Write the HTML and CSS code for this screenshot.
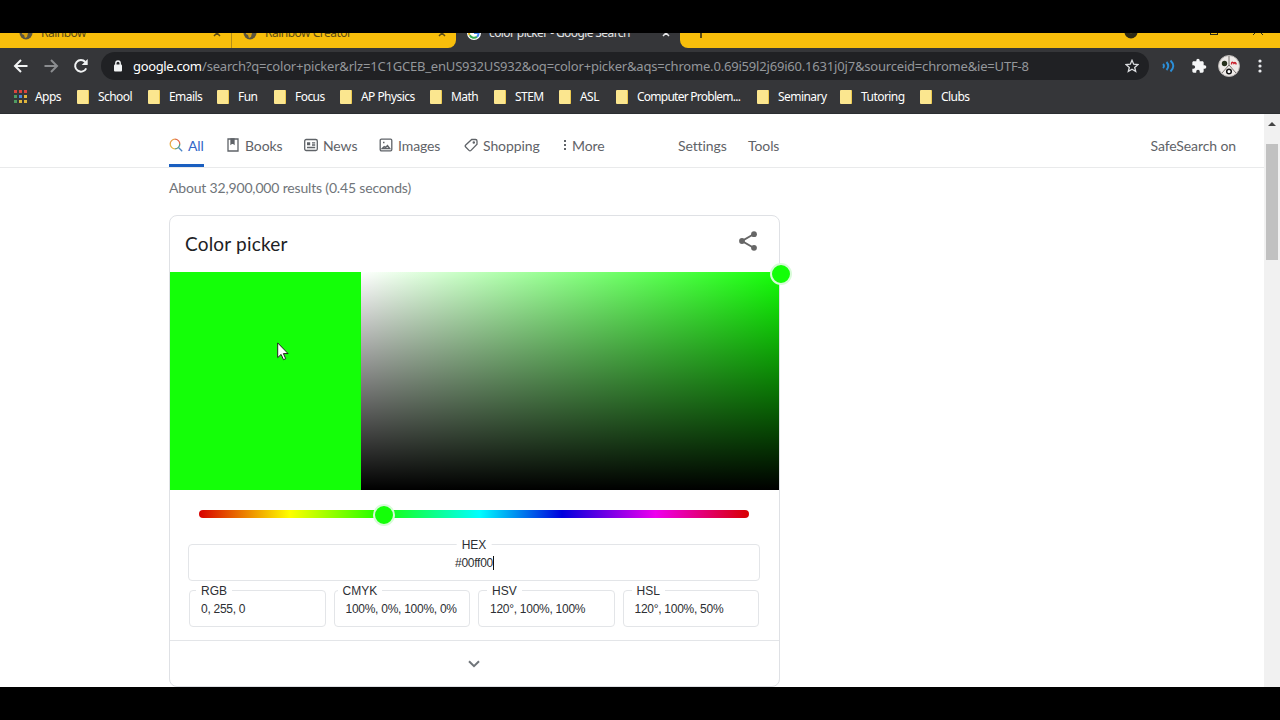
FILE: index.html
```
<!DOCTYPE html>
<html lang="en">
<head>
  <meta charset="UTF-8" />
  <meta name="viewport" content="width=device-width, initial-scale=1.0" />
  <title>color picker - Google Search</title>
  <link rel="stylesheet" href="styles.css">
</head>
<body>
  <div class="tabstrip">
    <div class="tab tab-first">
      <svg class="favicon" viewBox="0 0 14 14"><circle cx="7" cy="7" r="6.5" fill="#5b5540"/><path d="M3 5l3-2 3 4-1 4-2 1-1-3-2-1z" fill="#d9a20c"/></svg>
      <span class="tab-title">Rainbow</span>
      <svg class="tab-close" viewBox="0 0 8 8"><path d="M1 1l6 6M7 1L1 7"/></svg>
    </div>
    <div class="tab tab-second">
      <svg class="favicon" viewBox="0 0 14 14"><circle cx="7" cy="7" r="6.5" fill="#5b5540"/><path d="M3 5l3-2 3 4-1 4-2 1-1-3-2-1z" fill="#d9a20c"/></svg>
      <span class="tab-title">Rainbow Creator</span>
      <svg class="tab-close" viewBox="0 0 8 8"><path d="M1 1l6 6M7 1L1 7"/></svg>
    </div>
    <div class="tab tab-active">
      <svg class="favicon" viewBox="0 0 14 14"><circle cx="7" cy="7" r="7" fill="#fff"/><path d="M2.5 5a5 5 0 0 0 0 4" stroke="#e8b313" stroke-width="2" fill="none"/><path d="M2.8 9.2A4.8 4.8 0 0 0 10 10.8" stroke="#34a853" stroke-width="2" fill="none"/><path d="M7 7h4.6a5 5 0 0 1-1.6 3.8" stroke="#4285f4" stroke-width="2" fill="none"/></svg>
      <span class="tab-title">color picker - Google Search</span>
      <svg class="tab-close" viewBox="0 0 8 8"><path d="M1 1l6 6M7 1L1 7"/></svg>
    </div>
    <div class="tab-rest">
      <svg class="new-tab" viewBox="0 0 12 12"><path d="M6 0v12M0 6h12"/></svg>
      <svg class="tab-search" viewBox="0 0 14 14"><circle cx="7" cy="7" r="6.5" fill="#2d2a16"/><path d="M4.5 6L7 8.500l2.500-2.500z" fill="#c99b0b"/></svg>
      <span class="win-max"></span>
      <svg class="win-close" viewBox="0 0 10 10"><path d="M0 0l10 10M10 0L0 10"/></svg>
    </div>
  </div>

  <div class="toolbar">
    <svg class="nav-icon" viewBox="0 0 16 16"><path d="M14.500 8H2.500M8 2L2 8l6 6"/></svg>
    <svg class="nav-icon dim" viewBox="0 0 16 16"><path d="M1.500 8h12M8 2l6 6-6 6"/></svg>
    <svg class="nav-icon" viewBox="0 0 16 16"><path d="M13.200 10.300A5.800 5.800 0 1 1 12.300 4"/><path d="M14.700 1v6H8.700z" class="solid"/></svg>
    <div class="omnibox">
      <svg class="lock" viewBox="0 0 10 12"><rect x="1" y="4.500" width="8" height="7" rx="1" fill="#f1f3f4"/><path d="M2.800 5V3.200a2.200 2.200 0 0 1 4.400 0V5" fill="none" stroke="#f1f3f4" stroke-width="1.400"/></svg>
      <span class="host">google.com</span><span class="path">/search?q=color+picker&amp;rlz=1C1GCEB_enUS932US932&amp;oq=color+picker&amp;aqs=chrome.0.69i59l2j69i60.1631j0j7&amp;sourceid=chrome&amp;ie=UTF-8</span>
      <svg class="star" viewBox="0 0 14 14"><path d="M7 1.300l1.700 3.900 4.200.4-3.200 2.800 1 4.100L7 10.300l-3.700 2.200 1-4.100L1.100 5.600l4.200-.4z"/></svg>
    </div>
    <svg class="ext-waves" viewBox="0 0 16 14"><path d="M2 5q2 2 0 4M5.500 3q3.500 4 0 8M9.500 1.500q5.500 5.500 0 11"/></svg>
    <svg class="ext-puzzle" viewBox="0 0 24 24"><path d="M20.500 11H19V7c0-1.100-.9-2-2-2h-4V3.500a2.500 2.500 0 0 0-5 0V5H4c-1.100 0-2 .9-2 2v3.800h1.500a2.700 2.700 0 0 1 0 5.400H2V20c0 1.100.9 2 2 2h3.800v-1.500a2.700 2.700 0 0 1 5.400 0V22H17c1.100 0 2-.9 2-2v-4h1.500a2.500 2.500 0 0 0 0-5z"/></svg>
    <svg class="avatar" viewBox="0 0 22 22"><circle cx="11" cy="11" r="10.500" fill="#eeeae8" stroke="#b8b4b2"/><path d="M11 1v9M11 10l-7 8M11 10l7 8" stroke="#77706c" stroke-width="1"/><circle cx="6.500" cy="8.500" r="2.700" fill="#26301c"/><path d="M13.500 9.500q0-3 1.500-2t1 1q.5-2 2 0v1" stroke="#c9202c" stroke-width="1.400" fill="none"/><circle cx="11" cy="16.500" r="2.300" fill="#fff" stroke="#111" stroke-width="1.500"/></svg>
    <svg class="kebab" viewBox="0 0 4 14"><circle cx="2" cy="2" r="1.600"/><circle cx="2" cy="7" r="1.600"/><circle cx="2" cy="12" r="1.600"/></svg>
  </div>

  <div class="bookmarks">
    <div class="bookmark">
      <svg class="apps-icon" viewBox="0 0 13 13">
        <path d="M0 0h3v3H0z" fill="#d9443c"/><path d="M5 0h3v3H5z" fill="#d9443c"/><path d="M10 0h3v3h-3z" fill="#d9443c"/>
        <path d="M0 5h3v3H0z" fill="#4f9b62"/><path d="M5 5h3v3H5z" fill="#4a86dc"/><path d="M10 5h3v3h-3z" fill="#e0b53c"/>
        <path d="M0 10h3v3H0z" fill="#4f9b62"/><path d="M5 10h3v3H5z" fill="#e0b53c"/><path d="M10 10h3v3h-3z" fill="#e0b53c"/>
      </svg>
      <span>Apps</span>
    </div>
    <div class="bookmark"><i class="folder"></i><span>School</span></div>
    <div class="bookmark"><i class="folder"></i><span>Emails</span></div>
    <div class="bookmark"><i class="folder"></i><span>Fun</span></div>
    <div class="bookmark"><i class="folder"></i><span>Focus</span></div>
    <div class="bookmark"><i class="folder"></i><span>AP Physics</span></div>
    <div class="bookmark"><i class="folder"></i><span>Math</span></div>
    <div class="bookmark"><i class="folder"></i><span>STEM</span></div>
    <div class="bookmark"><i class="folder"></i><span>ASL</span></div>
    <div class="bookmark long"><i class="folder"></i><span>Computer Problem...</span></div>
    <div class="bookmark"><i class="folder"></i><span>Seminary</span></div>
    <div class="bookmark"><i class="folder"></i><span>Tutoring</span></div>
    <div class="bookmark"><i class="folder"></i><span>Clubs</span></div>
  </div>

  <div class="viewport">
    <div class="page">
      <div class="search-nav">
        <a class="nav-item selected">
          <svg viewBox="0 0 14 14"><path d="M1.200 6A4.800 4.800 0 0 1 6 1.200" stroke="#e8a04a"/><path d="M6 1.200A4.800 4.800 0 0 1 10.800 6" stroke="#e06a4c"/><path d="M1.200 6A4.800 4.800 0 0 0 6 10.800" stroke="#e8b84a"/><path d="M6 10.800A4.800 4.800 0 0 0 10.800 6" stroke="#5a9f86"/><path d="M9.500 9.500L13.200 13.200" stroke="#4a86c8"/></svg>
          <span>All</span>
        </a>
        <a class="nav-item">
          <svg viewBox="0 0 14 14"><path d="M2 1h10v12H2z"/><path d="M5 1v5l1.500-1.200L8 6V1z" fill="#5f6368"/></svg>
          <span>Books</span>
        </a>
        <a class="nav-item">
          <svg viewBox="0 0 14 14"><rect x=".7" y="1.500" width="12.600" height="11" rx="1.500"/><path d="M3 4.800h3.200M3 6.500h3.200M3 5.600h3.200M8 4.800h3.200M8 7h3.200M3 9.500h8.200"/></svg>
          <span>News</span>
        </a>
        <a class="nav-item">
          <svg viewBox="0 0 14 14"><rect x="1.200" y="1.200" width="11.600" height="11.600" rx="1.200"/><path d="M3.200 10.500l2-2 1.300 1 2-2 2.300 3zM4 4.500h1.500"/></svg>
          <span>Images</span>
        </a>
        <a class="nav-item">
          <svg viewBox="0 0 14 14"><path d="M7.700 1.500h3.800q1.500 0 1.500 1.500v3.200L7 12.400q-1 1-2 0L1.700 9q-1-1 0-2z"/><circle cx="9.800" cy="4.500" r=".6"/></svg>
          <span>Shopping</span>
        </a>
        <a class="nav-item more">
          <svg viewBox="0 0 4 14"><path d="M2 2v2M2 6v2M2 10v2" stroke-width="2"/></svg>
          <span>More</span>
        </a>
        <a class="nav-item">Settings</a>
        <a class="nav-item">Tools</a>
        <a class="nav-item safe">SafeSearch on</a>
      </div>

      <p class="result-stats">About 32,900,000 results (0.45 seconds)</p>

      <div class="card">
        <div class="card-head">
          <h2>Color picker</h2>
          <svg class="share" viewBox="0 0 18 20"><path d="M15 3L3 10l12 7" fill="none" stroke="#666" stroke-width="2"/><circle cx="15" cy="3.200" r="2.900"/><circle cx="3" cy="10" r="2.900"/><circle cx="15" cy="16.800" r="2.900"/></svg>
        </div>
        <div class="picker">
          <div class="swatch">
            <svg class="cursor" viewBox="0 0 12 19"><path d="M.7.9v14.700l3.400-3.200 2.400 5.300 2.200-1-2.300-5.100h4.700z" fill="#fff" stroke="#222" stroke-width="1"/></svg>
          </div>
          <div class="shade">
            <span class="handle shade-handle"></span>
          </div>
        </div>
        <div class="hue">
          <span class="handle hue-handle"></span>
        </div>
        <div class="field hex">
          <label>HEX</label>
          <span class="value">#00ff00<i class="caret"></i></span>
        </div>
        <div class="field-row">
          <div class="field"><label>RGB</label><span class="value">0, 255, 0</span></div>
          <div class="field cmyk"><label>CMYK</label><span class="value">100%, 0%, 100%, 0%</span></div>
          <div class="field hs"><label>HSV</label><span class="value">120°, 100%, 100%</span></div>
          <div class="field hs"><label>HSL</label><span class="value">120°, 100%, 50%</span></div>
        </div>
        <div class="expand">
          <svg viewBox="0 0 12 8"><path d="M1 1.200l5 5 5-5"/></svg>
        </div>
      </div>
    </div>
    <div class="scrollbar">
      <span class="arrow-up"></span>
      <span class="thumb"></span>
    </div>
  </div>
</body>
</html>
```
FILE: styles.css
```
* {
  margin: 0;
  padding: 0;
  box-sizing: border-box;
}
body {
  width: 1280px;
  height: 720px;
  padding: 33px 0;
  overflow: hidden;
  background: #000;
  font-family: Lato, sans-serif;
}
svg {
  display: block;
  flex-shrink: 0;
}

/* tabs, cut off at the top of the window */
.tabstrip {
  display: flex;
  height: 16px;
  background: #353639;
  overflow: hidden;
  font-family: "Noto Sans", sans-serif;
  font-size: 12px;
  border-bottom: 1px solid #353639;
}
.tab {
  display: flex;
  align-items: center;
  height: 30px;
  margin-top: -15px;
  background: #f8be0b;
  color: #5e4c14;
}
.tab-first {
  width: 232px;
  padding: 0 10px 1px 19px;
  border-right: 1px solid #b78e16;
}
.tab-second {
  width: 224px;
  padding: 0 10px 1px 11px;
  border-bottom-right-radius: 8px;
}
.tab-active {
  width: 224px;
  padding: 0 10px 1px 11px;
  background: #353639;
  color: #e4e5e6;
}
.favicon {
  width: 14px;
  height: 14px;
  margin-right: 8px;
}
.tab-title {
  flex: 1;
  white-space: nowrap;
  letter-spacing: -0.5px;
}
.tab-active .tab-title {
  letter-spacing: -0.6px;
}
.tab-close {
  width: 8px;
  height: 8px;
  stroke: currentColor;
  stroke-width: 1.5;
}
.tab-rest {
  flex: 1;
  display: flex;
  align-items: center;
  height: 30px;
  margin-top: -15px;
  padding: 0 0 3px 15px;
  background: #f8be0b;
  border-bottom-left-radius: 8px;
}
.new-tab {
  width: 12px;
  height: 12px;
  stroke: #5e4c14;
  stroke-width: 2;
}
.tab-search {
  width: 14px;
  height: 14px;
  margin-left: 417px;
}
.win-max {
  width: 8px;
  height: 9px;
  margin: 0 0 2px 72px;
  border: 1px solid #2d2a16;
}
.win-close {
  width: 10px;
  height: 10px;
  margin: 0 0 4px 35px;
  stroke: #2d2a16;
}

/* toolbar */
.toolbar {
  display: flex;
  align-items: center;
  height: 33px;
  padding-left: 13px;
  background: #353639;
}
.nav-icon {
  width: 16px;
  height: 16px;
  margin-right: 14px;
  fill: none;
  stroke: #f1f3f4;
  stroke-width: 2;
}
.nav-icon .solid {
  fill: #f1f3f4;
  stroke: none;
}
.nav-icon.dim {
  stroke: #8b8d90;
}
.omnibox {
  display: flex;
  align-items: center;
  width: 1048px;
  height: 28px;
  margin-left: -2px;
  padding-left: 12px;
  border-radius: 14px;
  background: #202124;
  font-family: "Noto Sans", sans-serif;
  font-size: 13px;
  white-space: nowrap;
}
.lock {
  width: 10px;
  height: 12px;
  margin-right: 10px;
}
.host {
  width: 69px;
  color: #fff;
  letter-spacing: -0.35px;
}
.path {
  width: 827px;
  color: #94979b;
  letter-spacing: -0.19px;
}
.star {
  width: 14px;
  height: 14px;
  margin-left: 96px;
  fill: none;
  stroke: #dcdee0;
  stroke-width: 1.3;
}
.ext-waves {
  width: 16px;
  height: 14px;
  margin-left: 12px;
  fill: none;
  stroke: #2b8fd9;
  stroke-width: 1.9;
}
.ext-puzzle {
  width: 16px;
  height: 16px;
  margin-left: 14px;
  fill: #f5f6f7;
}
.avatar {
  width: 22px;
  height: 22px;
  margin-left: 11px;
}
.kebab {
  width: 4px;
  height: 14px;
  margin-left: 18px;
  fill: #e8eaed;
}

/* bookmarks */
.bookmarks {
  display: grid;
  grid-template-columns: 63px 71px 69px 57px 66px 90px 64px 65px 57px 141px 83px 80px 60px;
  height: 32px;
  padding-left: 14px;
  background: #353639;
  border-bottom: 1px solid #2b2e31;
  font-family: "Noto Sans", sans-serif;
  font-size: 12px;
  color: #fff;
}
.bookmark {
  display: flex;
  align-items: center;
  height: 29px;
  white-space: nowrap;
  letter-spacing: -0.55px;
}
.bookmark.long {
  letter-spacing: -0.75px;
}
.apps-icon {
  width: 13px;
  height: 13px;
  margin-right: 8px;
}
.folder {
  width: 12px;
  height: 14px;
  margin-right: 9px;
  background: #fbe68f;
  border-right: 1px solid #edc94f;
  border-radius: 1px;
}

/* page */
.viewport {
  display: flex;
  height: 573px;
  background: #fff;
}
.page {
  flex: 1;
}
.search-nav {
  display: grid;
  grid-template-columns: 57px 78px 75px 85px 99px 115px 70px 1fr auto;
  height: 54px;
  padding-left: 169px;
  border-bottom: 1px solid #e9eaeb;
  font-size: 14px;
  letter-spacing: -0.1px;
  color: #5f6368;
}
.nav-item {
  display: flex;
  align-items: center;
  justify-self: start;
  height: 53px;
  padding-top: 9px;
  white-space: nowrap;
}
.nav-item svg {
  width: 14px;
  height: 14px;
  margin-right: 5px;
  fill: none;
  stroke: #5f6368;
  stroke-width: 1.3;
}
.nav-item.selected {
  padding-top: 12px;
  border-bottom: 3px solid #1a5fc0;
  color: #3367c8;
}
.nav-item.more svg {
  width: 4px;
}
.nav-item.safe {
  margin-right: 28px;
}
.result-stats {
  margin: 11px 0 18px 169px;
  height: 18px;
  line-height: 18px;
  font-size: 14px;
  letter-spacing: -0.17px;
  color: #70757a;
}
.card {
  width: 611px;
  height: 472px;
  margin-left: 169px;
  border: 1px solid #dfe1e5;
  border-radius: 8px;
}
.card-head {
  display: flex;
  justify-content: space-between;
  height: 56px;
  padding: 15px 22px 0 15px;
}
.card-head h2 {
  font-size: 19px;
  line-height: 26px;
  font-weight: 400;
  letter-spacing: 0.2px;
  color: #202124;
}
.share {
  width: 18px;
  height: 20px;
  fill: #666;
}
.picker {
  display: flex;
  height: 218px;
}
.swatch {
  width: 191px;
  padding: 70px 0 0 107px;
  background: #14ff08;
}
.cursor {
  width: 12px;
  height: 19px;
}
.shade {
  position: relative;
  flex: 1;
  background: linear-gradient(to top, #000, transparent), linear-gradient(to right, #fff, #14ff08);
}
.handle {
  position: absolute;
  width: 22px;
  height: 22px;
  border: 2px solid #d9fbd9;
  border-radius: 50%;
  background: #14ff08;
}
.shade-handle {
  top: -9px;
  right: -13px;
}
.hue {
  position: relative;
  width: 550px;
  height: 8px;
  margin: 20px 0 0 29px;
  border-radius: 4px;
  background: linear-gradient(to right, #d80000, #ff0 16.5%, #19ff00 33%, #0ff 51%, #00d 66%, #e0e 83%, #d80000);
}
.hue-handle {
  top: -6px;
  left: 174px;
}
.field {
  position: relative;
  height: 37px;
  border: 1px solid #e3e5e8;
  border-radius: 4px;
  font-family: "Liberation Sans", sans-serif;
  font-size: 12px;
  color: #2d2f33;
}
.field label {
  position: absolute;
  top: -7px;
  left: 6px;
  padding: 0 5px;
  line-height: 14px;
  background: #fff;
}
.field .value {
  display: block;
  padding: 10px 0 0 11px;
  line-height: 16px;
  letter-spacing: -0.27px;
  white-space: nowrap;
}
.hex {
  width: 572px;
  margin: 26px 0 0 18px;
}
.hex label {
  left: 50%;
  transform: translateX(-50%);
}
.hex .value {
  display: flex;
  justify-content: center;
  padding-left: 1px;
}
.caret {
  width: 1px;
  height: 14px;
  margin-top: 1px;
  background: #111;
}
.field-row {
  display: grid;
  grid-template-columns: repeat(4, 1fr);
  column-gap: 8px;
  width: 570px;
  margin: 9px 0 0 19px;
}
.cmyk label {
  left: 3px;
}
.hs label {
  left: 8px;
}
.expand {
  display: flex;
  justify-content: center;
  align-items: center;
  height: 47px;
  margin-top: 13px;
  padding-right: 1px;
  border-top: 1px solid #e3e5e8;
}
.expand svg {
  width: 12px;
  height: 8px;
  fill: none;
  stroke: #70757a;
  stroke-width: 2;
}

/* scrollbar */
.scrollbar {
  width: 16px;
  padding: 8px 2px;
  background: #f1f1f1;
}
.arrow-up {
  display: block;
  width: 8px;
  margin: 0 2px;
  border: 4px solid transparent;
  border-top: 0;
  border-bottom-color: #444;
}
.thumb {
  display: block;
  height: 116px;
  margin-top: 18px;
  background: #c1c1c1;
}
```
